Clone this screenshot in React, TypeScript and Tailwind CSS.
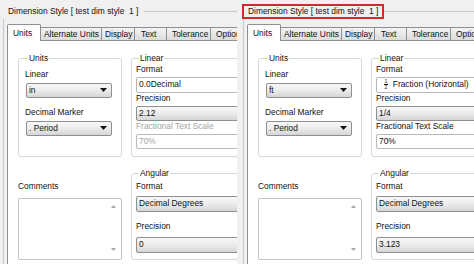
import React from 'react';

type PanelProps = {
  highlight?: boolean;
  unit: string;
  format: React.ReactNode;
  precision: string;
  scaleEnabled: boolean;
  angPrecision: string;
};

const DropArrow = () => (
  <svg width="7" height="4" viewBox="0 0 7 4" className="shrink-0">
    <path d="M0 0H7L3.5 4Z" fill="#111" />
  </svg>
);

const ScrollArrow = ({ up }: { up?: boolean }) => (
  <svg width="5" height="3" viewBox="0 0 5 3">
    <path d={up ? 'M0 3H5L2.5 0Z' : 'M0 0H5L2.5 3Z'} fill="#a5a5a5" />
  </svg>
);

const Select = ({ value, className = '' }: { value: React.ReactNode; className?: string }) => (
  <div
    className={`flex items-center justify-between border border-[#8e8f8f] rounded-[2px] bg-linear-to-b from-[#f8f8f8] via-[#ebebeb] to-[#d5d5d5] pl-[2px] pr-[4px] text-[#111] ${className}`}
  >
    <span className="whitespace-nowrap">{value}</span>
    <DropArrow />
  </div>
);

const TextBox = ({ value, className = '' }: { value: React.ReactNode; className?: string }) => (
  <div className={`flex items-center border border-[#b8b8b8] rounded-[2px] bg-white pl-[2px] whitespace-nowrap ${className}`}>
    {value}
  </div>
);

const tabs = [
  { label: 'Units', cls: 'w-[34px] h-[17px] pl-[5px] pt-[2px] border border-b-0 bg-white relative z-10 -mb-px rounded-t-[2px]' },
  { label: 'Alternate Units', cls: 'w-[61px] h-[13px] pl-[3px] border-t border-r bg-linear-to-b from-[#f4f4f4] to-[#dcdcdc]' },
  { label: 'Display', cls: 'w-[33px] h-[13px] pl-[3px] border-t border-r bg-linear-to-b from-[#f4f4f4] to-[#dcdcdc]' },
  { label: 'Text', cls: 'w-[32px] h-[13px] pl-[6px] border-t border-r bg-linear-to-b from-[#f4f4f4] to-[#dcdcdc]' },
  { label: 'Tolerance', cls: 'w-[44px] h-[13px] pl-[5px] border-t border-r bg-linear-to-b from-[#f4f4f4] to-[#dcdcdc]' },
  { label: 'Options', cls: 'w-[44px] h-[13px] pl-[5px] border-t border-r bg-linear-to-b from-[#f4f4f4] to-[#dcdcdc]' },
];

const Half = () => (
  <span className="inline-flex flex-col items-center align-middle leading-none text-[5px] mr-[5px]">
    <span className="border-b border-[#111] px-[0.5px]">1</span>
    <span>2</span>
  </span>
);

const Panel = ({ highlight, unit, format, precision, scaleEnabled, angPrecision }: PanelProps) => {
  const muted = scaleEnabled ? 'text-[#111]' : 'text-[#a3a3a3]';
  return (
    <fieldset className="ml-[3px] mt-[4px] h-[300px] border-l border-t border-[#c8c8c8] rounded-tl-[3px] min-w-0">
      <legend
        className={`ml-[-2px] border-2 px-[4px] leading-[11px] ${highlight ? 'border-[#d8262e]' : 'border-transparent'}`}
      >
        Dimension Style [ test dim style&nbsp; 1 ]
      </legend>

      <div className="mt-[5px] pl-[3px] flex items-end">
        {tabs.map((t) => (
          <div key={t.label} className={`shrink-0 overflow-hidden border-[#8c8f96] whitespace-nowrap leading-[12px] ${t.cls}`}>
            {t.label}
          </div>
        ))}
      </div>

      <div className="ml-[3px] border-t border-l border-[#8c8f96] bg-white pl-[10px] pt-[12px] h-[240px]">
        <div className="flex gap-[9px]">
          <fieldset className="w-[104px] shrink-0 border border-[#cfd9df] rounded-[3px] pl-[6px] min-w-0">
            <legend className="ml-[3px] px-[1px] leading-[11px]">Units</legend>
            <div className="mt-[5px] leading-[11px]">Linear</div>
            <Select value={unit} className="mt-[2.5px] ml-[1px] w-[86px] h-[15px]" />
            <div className="mt-[9px] leading-[11px]">Decimal Marker</div>
            <Select value=". Period" className="mt-[3px] ml-[1px] w-[86px] h-[15px]" />
          </fieldset>

          <fieldset className="w-[150px] shrink-0 border border-[#cfd9df] rounded-[3px] pl-[4px] pb-[7px] min-w-0">
            <legend className="ml-[3px] px-[1px] leading-[11px]">Linear</legend>
            <div className="leading-[11px]">Format</div>
            <TextBox value={format} className="mt-[1.5px] h-[16px] w-[140px]" />
            <div className="leading-[11px]">Precision</div>
            <Select value={precision} className="mt-[2px] h-[15px] w-[140px]" />
            <div className={`leading-[11px] ${muted}`}>Fractional Text Scale</div>
            <TextBox value={<span className={muted}>70%</span>} className="mt-[2px] h-[15px] w-[140px]" />
          </fieldset>
        </div>

        <div className="flex gap-[9px] mt-[11.5px]">
          <div className="w-[104px] shrink-0 pt-[13px]">
            <div className="leading-[11px]">Comments</div>
            <div className="mt-[5.5px] h-[62px] border border-[#c4c4c4] rounded-[2px] bg-white flex justify-end">
              <div className="w-[16px] flex flex-col items-center justify-between pt-[6px] pb-[8px]">
                <ScrollArrow up />
                <ScrollArrow />
              </div>
            </div>
          </div>

          <fieldset className="w-[150px] shrink-0 border border-[#cfd9df] rounded-[3px] pl-[4px] pb-[6px] min-w-0">
            <legend className="ml-[3px] px-[1px] leading-[11px]">Angular</legend>
            <div className="mt-[2px] leading-[11px]">Format</div>
            <Select value="Decimal Degrees" className="mt-[3.5px] h-[16px] w-[140px]" />
            <div className="mt-[9.5px] leading-[11px]">Precision</div>
            <Select value={angPrecision} className="mt-[4.5px] h-[16px] w-[140px]" />
          </fieldset>
        </div>
      </div>
    </fieldset>
  );
};

export default function App() {
  return (
    <div className="w-[474px] h-[264px] flex overflow-hidden bg-white font-['Liberation_Sans',Arial,sans-serif] text-[8.4px] text-[#111]">
      <div className="w-[237px] h-full shrink-0 overflow-hidden bg-[#f0f0f0]">
        <Panel unit="in" format="0.0Decimal" precision="2.12" scaleEnabled={false} angPrecision="0" />
      </div>
      <div className="w-[237px] h-full shrink-0 overflow-hidden bg-[#f0f0f0] pl-[3px]">
        <Panel
          highlight
          unit="ft"
          format={
            <span className="flex items-center pl-[5px]">
              <Half />
              Fraction (Horizontal)
            </span>
          }
          precision="1/4"
          scaleEnabled
          angPrecision="3.123"
        />
      </div>
    </div>
  );
}
